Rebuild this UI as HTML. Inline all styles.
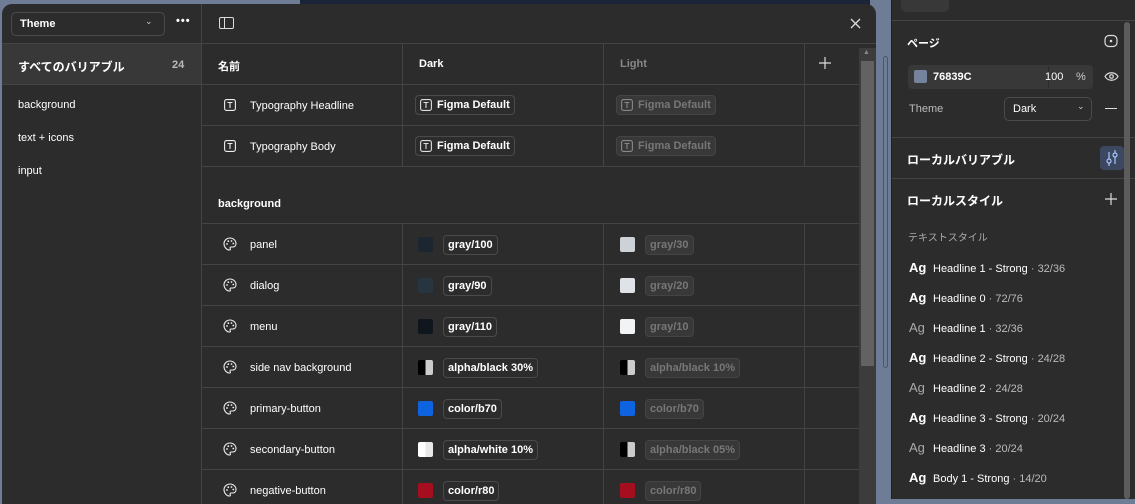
<!DOCTYPE html>
<html><head><meta charset="utf-8"><style>
*{box-sizing:border-box;margin:0;padding:0}
body{width:1135px;height:499px;overflow:hidden;background:#6f7c95;font-family:"Liberation Sans","Noto Sans CJK JP",sans-serif;color:#fff;position:relative;font-size:11px}
.abs{position:absolute}
.topbg{left:300px;top:0;width:570px;height:6px;background:#1c2438}
.dlg{left:2px;top:4px;width:874px;height:500px;background:#2c2c2c;border-radius:10px 10px 0 0;overflow:hidden}
.hl{position:absolute;background:#444;height:1px}
.vl{position:absolute;background:#444;width:1px}
.b{font-weight:bold}
.pill{position:absolute;height:20px;border:1px solid #4a4a4a;border-radius:4px;padding:0 4px;line-height:18px;font-weight:bold;font-size:11px;display:flex;align-items:center;gap:5px}
.pill.l{color:#777;background:#383838;border-color:#444}
.sw{position:absolute;width:15px;height:15px;border-radius:2px}
.txt{position:absolute;font-size:11px}
.panel{left:891px;top:0;width:244px;height:499px;background:#2c2c2c}
svg{display:block}
</style></head><body>
<div class="abs topbg"></div>
<div class="abs dlg">
 <div class="abs" style="left:9px;top:8px;width:154px;height:24px;border:1px solid #4a4a4a;border-radius:5px"></div>
 <div class="txt b" style="left:18px;top:14px">Theme</div>
 <div class="txt" style="left:143px;top:12px;font-size:9px;color:#ccc">⌄</div>
 <div class="txt b" style="left:174px;top:11px;letter-spacing:1px">•••</div>
 <div class="vl" style="left:199px;top:0;height:500px"></div>
 <div class="hl" style="left:0;top:39px;width:874px"></div>
 <div class="abs" style="left:0;top:40px;width:199px;height:40px;background:#383838"></div>
 <div class="hl" style="left:0;top:80px;width:199px"></div>
 <div class="txt b" style="left:16px;top:54px;font-size:12px">すべてのバリアブル</div>
 <div class="txt b" style="left:170px;top:55px;color:#bbb">24</div>
 <div class="txt" style="left:16px;top:95px">background</div>
 <div class="txt" style="left:16px;top:128px">text + icons</div>
 <div class="txt" style="left:16px;top:161px">input</div>
 <div class="abs" style="left:217px;top:13px;width:15px;height:12px;border:1.3px solid #ddd;border-radius:2px"></div>
 <div class="abs" style="left:222px;top:13px;width:1.3px;height:12px;background:#ddd"></div>
 <svg class="abs" style="left:848px;top:14px" width="11" height="11"><path d="M1 1L10 10M10 1L1 10" stroke="#ddd" stroke-width="1.3"/></svg>
 <div class="hl" style="left:200px;top:80px;width:657px"></div>
 <div class="hl" style="left:200px;top:121px;width:657px"></div>
 <div class="hl" style="left:200px;top:162px;width:657px"></div>
 <div class="hl" style="left:200px;top:219px;width:657px"></div>
 <div class="hl" style="left:200px;top:260px;width:657px"></div>
 <div class="hl" style="left:200px;top:301px;width:657px"></div>
 <div class="hl" style="left:200px;top:342px;width:657px"></div>
 <div class="hl" style="left:200px;top:383px;width:657px"></div>
 <div class="hl" style="left:200px;top:424px;width:657px"></div>
 <div class="hl" style="left:200px;top:465px;width:657px"></div>
 <div class="vl" style="left:400px;top:40px;height:123px"></div>
 <div class="vl" style="left:601px;top:40px;height:123px"></div>
 <div class="vl" style="left:802px;top:40px;height:123px"></div>
 <div class="vl" style="left:400px;top:220px;height:280px"></div>
 <div class="vl" style="left:601px;top:220px;height:280px"></div>
 <div class="vl" style="left:802px;top:220px;height:280px"></div>
 <div class="txt b" style="left:216px;top:54px">名前</div>
 <div class="txt b" style="left:417px;top:54px">Dark</div>
 <div class="txt b" style="left:618px;top:54px;color:#888">Light</div>
 <svg class="abs" style="left:817px;top:53px" width="12" height="12"><path d="M6 0V12M0 6H12" stroke="#ddd" stroke-width="1.2"/></svg>
 <div class="abs" style="left:857px;top:44px;width:17px;height:460px;background:#3c3c3c"></div>
 <div class="abs" style="left:859px;top:57px;width:13px;height:305px;background:#626262"></div>
 <div class="txt" style="left:861px;top:45px;font-size:7px;color:#888">▲</div>
 <div id="rows"></div>
 <div class="txt b" style="left:216px;top:194px">background</div>
</div>
<div class="abs" style="left:883px;top:56px;width:5px;height:312px;border:1px solid #4c566a;border-radius:3px"></div>
<div class="abs panel">
 <div class="abs" style="left:0;top:0;width:1px;height:499px;background:#1e1e1e"></div>
 <div class="abs" style="left:10px;top:-6px;width:48px;height:18px;background:#383838;border-radius:5px"></div>
 <div class="hl" style="left:1px;top:20px;width:243px"></div>
 <div class="txt b" style="left:16px;top:35px">ページ</div>
 <svg class="abs" style="left:213px;top:34px" width="14" height="14"><rect x="1" y="1.5" width="12" height="11" rx="4" fill="none" stroke="#ddd" stroke-width="1.2"/><circle cx="7" cy="7" r="1.3" fill="#ddd"/></svg>
 <div class="abs" style="left:17px;top:65px;width:185px;height:24px;background:#383838;border-radius:4px"></div>
 <div class="abs" style="left:157px;top:66px;width:1px;height:22px;background:#2c2c2c"></div>
 <div class="abs" style="left:23px;top:70px;width:13px;height:13px;background:#76839c;border-radius:2px"></div>
 <div class="txt b" style="left:42px;top:71px">76839C</div>
 <div class="txt" style="left:154px;top:71px">100</div>
 <div class="txt" style="left:185px;top:71px;color:#ccc">%</div>
 <svg class="abs" style="left:213px;top:71px" width="15" height="11"><path d="M1 5.5C4 0.5 11 0.5 14 5.5C11 10.5 4 10.5 1 5.5Z" fill="none" stroke="#ddd" stroke-width="1.2"/><circle cx="7.5" cy="5.5" r="1.8" fill="none" stroke="#ddd" stroke-width="1.2"/></svg>
 <div class="txt" style="left:18px;top:103px;color:#bbb">Theme</div>
 <div class="abs" style="left:113px;top:97px;width:88px;height:24px;border:1px solid #4a4a4a;border-radius:5px"></div>
 <div class="txt" style="left:122px;top:103px">Dark</div>
 <div class="txt" style="left:186px;top:101px;font-size:9px;color:#ccc">⌄</div>
 <div class="abs" style="left:214px;top:108px;width:12px;height:1.3px;background:#ddd"></div>
 <div class="hl" style="left:1px;top:137px;width:243px"></div>
 <div class="txt b" style="left:16px;top:151px;font-size:12px">ローカルバリアブル</div>
 <div class="abs" style="left:209px;top:146px;width:24px;height:24px;background:#3c4760;border-radius:4px"></div>
 <svg class="abs" style="left:213px;top:150px" width="16" height="16"><path d="M5 2V16M11 0V14" stroke="#a8c4ff" stroke-width="1.2"/><circle cx="5" cy="11" r="2" fill="#3c4760" stroke="#a8c4ff" stroke-width="1.2"/><circle cx="11" cy="5" r="2" fill="#3c4760" stroke="#a8c4ff" stroke-width="1.2"/></svg>
 <div class="hl" style="left:1px;top:178px;width:243px"></div>
 <div class="txt b" style="left:16px;top:192px;font-size:12px">ローカルスタイル</div>
 <svg class="abs" style="left:214px;top:193px" width="12" height="12"><path d="M6 0V12M0 6H12" stroke="#ddd" stroke-width="1.2"/></svg>
 <div class="txt" style="left:17px;top:229px;color:#aaa;font-size:10px">テキストスタイル</div>
 <div id="styles"></div>
 <div class="abs" style="left:233px;top:22px;width:6px;height:477px;background:#5c5c5c;border-radius:3px"></div>
</div>
<script>
function T(c){return '<svg width="12" height="12"><rect x="0.6" y="0.6" width="10.8" height="10.8" rx="2" fill="none" stroke="'+c+'" stroke-width="1.1"/><path d="M3.5 3.5H8.5M6 3.5V9" stroke="'+c+'" stroke-width="1.1"/></svg>';}
var P='<svg width="14" height="14" viewBox="0 0 14 14"><path d="M7 1C3.7 1 1 3.6 1 6.8C1 10 3.7 13 6.5 13C7.5 13 7.6 12.2 7.2 11.6C6.8 11 7 10 8 10H9.6C11.6 10 13 8.6 13 6.6C13 3.5 10.3 1 7 1Z" fill="none" stroke="#eee" stroke-width="1.1"/><circle cx="4" cy="7" r="0.9" fill="#eee"/><circle cx="5.3" cy="4.2" r="0.9" fill="#eee"/><circle cx="8.5" cy="4" r="0.9" fill="#eee"/><circle cx="10.3" cy="6.5" r="0.9" fill="#eee"/></svg>';
var h="";
[["Typography Headline",91],["Typography Body",132]].forEach(function(x){
h+='<div class="abs" style="left:222px;top:'+(x[1]+4)+'px">'+T("#eee")+'</div>';
h+='<div class="txt" style="left:248px;top:'+(x[1]+5)+'px">'+x[0]+'</div>';
h+='<div class="pill" style="left:413px;top:'+x[1]+'px">'+T("#ddd")+'Figma Default</div>';
h+='<div class="pill l" style="left:614px;top:'+x[1]+'px">'+T("#888")+'Figma Default</div>';});
var r=[["panel","#1c2630","gray/100","#cdd2d9","gray/30"],["dialog","#263540","gray/90","#dfe2e6","gray/20"],["menu","#10161d","gray/110","#f2f3f5","gray/10"],["side nav background","half","alpha/black 30%","half","alpha/black 10%"],["primary-button","#0d63e0","color/b70","#0d63e0","color/b70"],["secondary-button","white","alpha/white 10%","half","alpha/black 05%"],["negative-button","#a50e1e","color/r80","#a50e1e","color/r80"]];
r.forEach(function(x,i){var y=230+41*i;
function sw(c,l){var bg=c=="half"?"linear-gradient(90deg,#000 50%,#ccc 50%)":c=="white"?"linear-gradient(90deg,#fff 50%,#e8e8e8 50%)":c;return '<div class="sw" style="left:'+l+'px;top:'+(y+3)+'px;background:'+bg+'"></div>';}
h+='<div class="abs" style="left:221px;top:'+(y+3)+'px">'+P+'</div>';
h+='<div class="txt" style="left:248px;top:'+(y+5)+'px">'+x[0]+'</div>';
h+=sw(x[1],416)+'<div class="pill" style="left:441px;top:'+(y+1)+'px">'+x[2]+'</div>';
h+=sw(x[3],618)+'<div class="pill l" style="left:643px;top:'+(y+1)+'px">'+x[4]+'</div>';});
document.getElementById("rows").innerHTML=h;
var s=[["b","Headline 1 - Strong","32/36"],["b","Headline 0","72/76"],["n","Headline 1","32/36"],["b","Headline 2 - Strong","24/28"],["n","Headline 2","24/28"],["b","Headline 3 - Strong","20/24"],["n","Headline 3","20/24"],["b","Body 1 - Strong","14/20"]];
var g="";s.forEach(function(x,i){var y=260+30*i;
g+='<div class="txt" style="left:18px;top:'+y+'px;font-size:13px;'+(x[0]=="b"?'font-weight:bold':'color:#aaa')+'">Ag</div>';
g+='<div class="txt" style="left:42px;top:'+(y+3)+'px">'+x[1]+' <span style="color:#bbb">· '+x[2]+'</span></div>';});
document.getElementById("styles").innerHTML=g;
</script>
</body></html>
